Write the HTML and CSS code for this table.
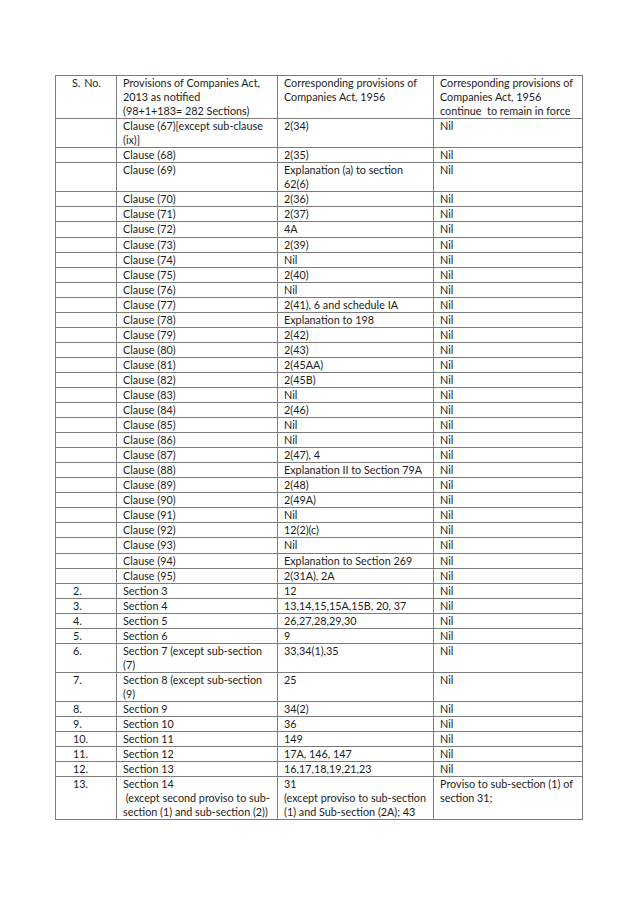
FILE: index.html
```
<!DOCTYPE html>
<html>
<head>
<meta charset="utf-8">
<link rel="stylesheet" href="styles.css">
</head>
<body>
<div class="page">
<table class="grid">
<colgroup><col class="c1"><col class="c2"><col class="c3"><col class="c4"></colgroup>
<tr><td class="sno hdr">S. No.</td><td>Provisions of Companies Act,<br>2013 as notified<br>(98+1+183= 282 Sections)</td><td>Corresponding provisions of<br>Companies Act, 1956</td><td>Corresponding provisions of<br>Companies Act, 1956<br>continue&nbsp; to remain in force</td></tr>
<tr><td class="sno"></td><td>Clause (67)[except sub-clause<br>(ix)]</td><td>2(34)</td><td>Nil</td></tr>
<tr><td class="sno"></td><td>Clause (68)</td><td>2(35)</td><td>Nil</td></tr>
<tr><td class="sno"></td><td>Clause (69)</td><td>Explanation (a) to section<br>62(6)</td><td>Nil</td></tr>
<tr><td class="sno"></td><td>Clause (70)</td><td>2(36)</td><td>Nil</td></tr>
<tr><td class="sno"></td><td>Clause (71)</td><td>2(37)</td><td>Nil</td></tr>
<tr><td class="sno"></td><td>Clause (72)</td><td>4A</td><td>Nil</td></tr>
<tr><td class="sno"></td><td>Clause (73)</td><td>2(39)</td><td>Nil</td></tr>
<tr><td class="sno"></td><td>Clause (74)</td><td>Nil</td><td>Nil</td></tr>
<tr><td class="sno"></td><td>Clause (75)</td><td>2(40)</td><td>Nil</td></tr>
<tr><td class="sno"></td><td>Clause (76)</td><td>Nil</td><td>Nil</td></tr>
<tr><td class="sno"></td><td>Clause (77)</td><td>2(41), 6 and schedule IA</td><td>Nil</td></tr>
<tr><td class="sno"></td><td>Clause (78)</td><td>Explanation to 198</td><td>Nil</td></tr>
<tr><td class="sno"></td><td>Clause (79)</td><td>2(42)</td><td>Nil</td></tr>
<tr><td class="sno"></td><td>Clause (80)</td><td>2(43)</td><td>Nil</td></tr>
<tr><td class="sno"></td><td>Clause (81)</td><td>2(45AA)</td><td>Nil</td></tr>
<tr><td class="sno"></td><td>Clause (82)</td><td>2(45B)</td><td>Nil</td></tr>
<tr><td class="sno"></td><td>Clause (83)</td><td>Nil</td><td>Nil</td></tr>
<tr><td class="sno"></td><td>Clause (84)</td><td>2(46)</td><td>Nil</td></tr>
<tr><td class="sno"></td><td>Clause (85)</td><td>Nil</td><td>Nil</td></tr>
<tr><td class="sno"></td><td>Clause (86)</td><td>Nil</td><td>Nil</td></tr>
<tr><td class="sno"></td><td>Clause (87)</td><td>2(47), 4</td><td>Nil</td></tr>
<tr><td class="sno"></td><td>Clause (88)</td><td>Explanation II to Section 79A</td><td>Nil</td></tr>
<tr><td class="sno"></td><td>Clause (89)</td><td>2(48)</td><td>Nil</td></tr>
<tr><td class="sno"></td><td>Clause (90)</td><td>2(49A)</td><td>Nil</td></tr>
<tr><td class="sno"></td><td>Clause (91)</td><td>Nil</td><td>Nil</td></tr>
<tr><td class="sno"></td><td>Clause (92)</td><td>12(2)(c)</td><td>Nil</td></tr>
<tr><td class="sno"></td><td>Clause (93)</td><td>Nil</td><td>Nil</td></tr>
<tr><td class="sno"></td><td>Clause (94)</td><td>Explanation to Section 269</td><td>Nil</td></tr>
<tr><td class="sno"></td><td>Clause (95)</td><td>2(31A), 2A</td><td>Nil</td></tr>
<tr><td class="sno">2.</td><td>Section 3</td><td>12</td><td>Nil</td></tr>
<tr><td class="sno">3.</td><td>Section 4</td><td>13,14,15,15A,15B, 20, 37</td><td>Nil</td></tr>
<tr><td class="sno">4.</td><td>Section 5</td><td>26,27,28,29,30</td><td>Nil</td></tr>
<tr><td class="sno">5.</td><td>Section 6</td><td>9</td><td>Nil</td></tr>
<tr><td class="sno">6.</td><td>Section 7 (except sub-section<br>(7)</td><td>33,34(1),35</td><td>Nil</td></tr>
<tr><td class="sno">7.</td><td>Section 8 (except sub-section<br>(9)</td><td>25</td><td>Nil</td></tr>
<tr><td class="sno">8.</td><td>Section 9</td><td>34(2)</td><td>Nil</td></tr>
<tr><td class="sno">9.</td><td>Section 10</td><td>36</td><td>Nil</td></tr>
<tr><td class="sno">10.</td><td>Section 11</td><td>149</td><td>Nil</td></tr>
<tr><td class="sno">11.</td><td>Section 12</td><td>17A, 146, 147</td><td>Nil</td></tr>
<tr><td class="sno">12.</td><td>Section 13</td><td>16,17,18,19,21,23</td><td>Nil</td></tr>
<tr><td class="sno">13.</td><td>Section 14<br>&nbsp;(except second proviso to sub-<br>section (1) and sub-section (2))</td><td>31<br>(except proviso to sub-section<br>(1) and Sub-section (2A); 43</td><td>Proviso to sub-section (1) of<br>section 31;</td></tr>
</table>
</div>
</body>
</html>
```
FILE: styles.css
```
html, body {
  margin: 0;
  padding: 0;
  background: #ffffff;
}
.page {
  width: 638px;
  padding-top: 75px;
  padding-left: 55px;
  box-sizing: border-box;
}
.grid {
  border-collapse: collapse;
  table-layout: fixed;
  width: 527px;
  font-family: Lato, "Open Sans", sans-serif;
  font-size: 10.8px;
  line-height: 14.04px;
  color: #1c1c1c;
}
.c1 { width: 61px; }
.c2 { width: 161px; }
.c3 { width: 156px; }
.c4 { width: 149px; }
.grid td {
  border: 1px solid #7c7c7c;
  padding: 0 4px 0 6px;
  vertical-align: top;
  white-space: nowrap;
  overflow: hidden;
}
.grid td.sno {
  padding-left: 17px;
  word-spacing: 1px;
}
.grid td.sno.hdr {
  padding-left: 16px;
}
```
